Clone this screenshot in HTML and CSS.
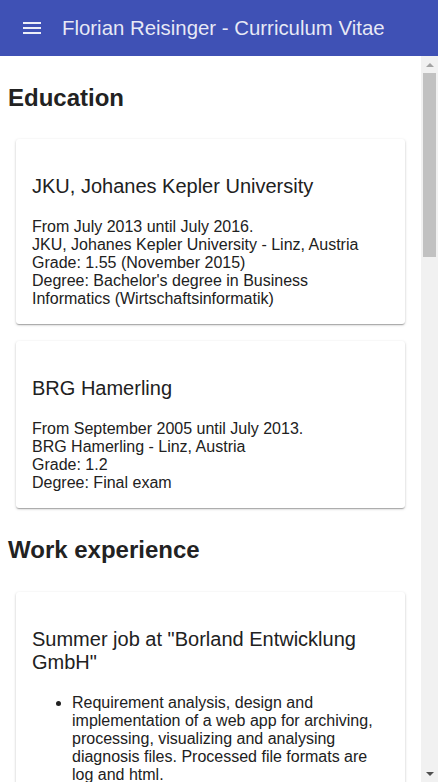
FILE: index.html
```html
<!DOCTYPE html>
<html lang="en">
<head>
<meta charset="utf-8">
<title>Florian Reisinger - Curriculum Vitae</title>
<link rel="stylesheet" href="styles.css">
</head>
<body>
<header class="appbar">
  <svg class="menu-icon" viewBox="0 0 24 24" width="24" height="24" aria-hidden="true">
    <path d="M3 18h18v-2H3v2zm0-5h18v-2H3v2zm0-7v2h18V6H3z" fill="currentColor"/>
  </svg>
  <span class="appbar-title">Florian Reisinger - Curriculum Vitae</span>
</header>
<div class="viewport">
  <main class="content">
    <section>
      <h2 class="section-title">Education</h2>
      <div class="cards">
        <article class="card">
          <h3 class="card-title">JKU, Johanes Kepler University</h3>
          <p class="card-text">From July 2013 until July 2016.<br>JKU, Johanes Kepler University - Linz, Austria<br>Grade: 1.55 (November 2015)<br>Degree: Bachelor's degree in Business Informatics (Wirtschaftsinformatik)</p>
        </article>
        <article class="card">
          <h3 class="card-title">BRG Hamerling</h3>
          <p class="card-text">From September 2005 until July 2013.<br>BRG Hamerling - Linz, Austria<br>Grade: 1.2<br>Degree: Final exam</p>
        </article>
      </div>
    </section>
    <section>
      <h2 class="section-title">Work experience</h2>
      <div class="cards">
        <article class="card">
          <h3 class="card-title">Summer job at "Borland Entwicklung GmbH"</h3>
          <ul class="card-list">
            <li>Requirement analysis, design and implementation of a web app for archiving, processing, visualizing and analysing diagnosis files. Processed file formats are log and html.</li>
          </ul>
        </article>
      </div>
    </section>
  </main>
  <div class="scrollbar" aria-hidden="true">
    <div class="scroll-btn"><span class="arrow-up"></span></div>
    <div class="scroll-track"><div class="scroll-thumb"></div></div>
    <div class="scroll-btn"><span class="arrow-down"></span></div>
  </div>
</div>
</body>
</html>
```
FILE: styles.css
```css
* { box-sizing: border-box; }
html, body { height: 100%; }
body {
  margin: 0;
  font-family: "Liberation Sans", Arial, Helvetica, sans-serif;
  color: #212121;
  background: #ffffff;
  display: flex;
  flex-direction: column;
  overflow: hidden;
}
.appbar {
  height: 56px;
  flex: 0 0 56px;
  background: #3f51b5;
  color: rgba(255, 255, 255, 0.88);
  display: flex;
  align-items: center;
  padding-left: 20px;
  gap: 18px;
}
.menu-icon { display: block; flex: 0 0 24px; color: rgba(255,255,255,0.9); }
.appbar-title {
  font-size: 20.4px;
  line-height: 24px;
  white-space: nowrap;
}
.viewport {
  flex: 1 1 auto;
  display: flex;
  min-height: 0;
}
.content {
  flex: 1 1 auto;
  overflow: hidden;
  padding: 8px;
}
.section-title {
  font-size: 24px;
  font-weight: bold;
  margin: 19.92px 0;
  color: #222222;
  line-height: 27.6px;
}
.cards {
  display: flex;
  flex-direction: column;
  gap: 17px;
  padding: 8px;
}
.card {
  background: #ffffff;
  border-radius: 3px;
  padding: 16px;
  box-shadow: 0 1px 3px rgba(0,0,0,0.2), 0 1px 1px rgba(0,0,0,0.14), 0 2px 1px -1px rgba(0,0,0,0.12);
}
.card-title {
  font-size: 20px;
  font-weight: normal;
  line-height: 23px;
  margin: 20px 0;
  color: #212121;
}
.card-text {
  font-size: 16px;
  line-height: 18px;
  margin: 0;
  color: #212121;
}
.card-list {
  font-size: 16px;
  line-height: 18px;
  margin: 16px 0 0;
  padding-left: 40px;
}
.scrollbar {
  flex: 0 0 17px;
  width: 17px;
  background: #f1f1f1;
  display: flex;
  flex-direction: column;
}
.scroll-btn {
  flex: 0 0 17px;
  height: 17px;
  display: flex;
  align-items: center;
  justify-content: center;
}
.arrow-up, .arrow-down {
  width: 0;
  height: 0;
  border-left: 4px solid transparent;
  border-right: 4px solid transparent;
}
.arrow-up { border-bottom: 4px solid #a3a3a3; }
.arrow-down { border-top: 4px solid #505050; }
.scroll-track {
  flex: 1 1 auto;
  padding: 0 2px;
}
.scroll-thumb {
  height: 184px;
  background: #c1c1c1;
}
```
